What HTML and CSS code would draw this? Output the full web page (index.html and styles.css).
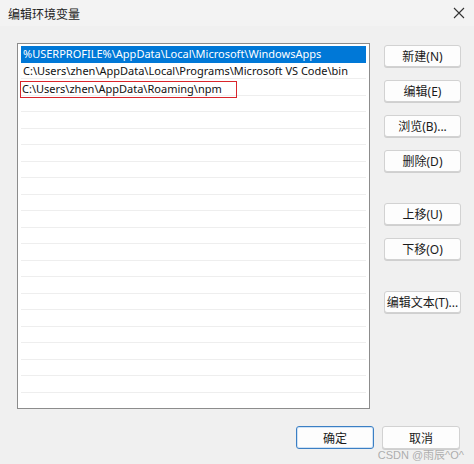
FILE: index.html
```html
<!DOCTYPE html>
<html lang="zh">
<head>
<meta charset="utf-8">
<link rel="stylesheet" href="styles.css">
</head>
<body>
<div class="window">
  <div class="titlebar">
    <span class="title">编辑环境变量</span>
    <svg class="close" width="12" height="12" viewBox="0 0 12 12"><path d="M1 1L11 11M11 1L1 11" stroke="#333" stroke-width="1.1" fill="none"/></svg>
  </div>
  <div class="content">
    <div class="list">
      <div class="row selected">%USERPROFILE%\AppData\Local\Microsoft\WindowsApps</div>
      <div class="row">C:\Users\zhen\AppData\Local\Programs\Microsoft VS Code\bin</div>
      <div class="row"><span class="marked">C:\Users\zhen\AppData\Roaming\npm</span></div>
      <div class="row"></div><div class="row"></div><div class="row"></div><div class="row"></div>
      <div class="row"></div><div class="row"></div><div class="row"></div><div class="row"></div>
      <div class="row"></div><div class="row"></div><div class="row"></div><div class="row"></div>
      <div class="row"></div><div class="row"></div><div class="row"></div><div class="row"></div>
      <div class="row"></div><div class="row"></div>
    </div>
    <div class="side">
      <button class="btn">新建(N)</button>
      <button class="btn">编辑(E)</button>
      <button class="btn">浏览(B)...</button>
      <button class="btn">删除(D)</button>
      <button class="btn group">上移(U)</button>
      <button class="btn">下移(O)</button>
      <button class="btn group">编辑文本(T)...</button>
    </div>
  </div>
  <div class="footer">
    <button class="btn primary">确定</button>
    <button class="btn">取消</button>
  </div>
  <div class="watermark">CSDN @雨辰^O^</div>
</div>
</body>
</html>
```
FILE: styles.css
```css
html, body {
  margin: 0;
  padding: 0;
  background: #f0f0f0;
}
.window {
  position: relative;
  width: 474px;
  height: 464px;
  background: #f0f0f0;
  font-family: "Noto Sans", "Noto Sans CJK SC", sans-serif;
  font-size: 12px;
  color: #1a1a1a;
  overflow: hidden;
}
.titlebar {
  height: 26px;
  display: flex;
  align-items: center;
  justify-content: space-between;
  padding: 0 8px 0 8px;
  background: #f3f3f3;
}
.title {
  font-family: "Noto Sans CJK SC", sans-serif;
  font-size: 12px;
  color: #222;
}
.close {
  margin-right: 1px;
}
.content {
  display: flex;
  align-items: flex-start;
  padding: 17px 0 0 17px;
}
.list {
  width: 345px;
  height: 362px;
  border: 1px solid #8c8c8c;
  background: #fff;
  padding: 2px 3px 0 3px;
  box-sizing: content-box;
  overflow: hidden;
}
.row {
  height: 16.5px;
  line-height: 16.5px;
  font-size: 11px;
  background-image: linear-gradient(#eeeeee, #eeeeee);
  background-size: 100% 1px;
  background-position: bottom;
  background-repeat: no-repeat;
  padding-left: 2px;
  white-space: nowrap;
  color: #111;
}
.row.selected {
  background: #0078d7;
  color: #fff;
}
.marked {
  display: inline-block;
  box-sizing: border-box;
  width: 217px;
  height: 17px;
  border: 1.5px solid #d9252c;
  padding-left: 1px;
  margin-left: -3px;
  margin-top: 2px;
  line-height: 14px;
  vertical-align: top;
}
.side {
  display: flex;
  flex-direction: column;
  margin-left: 14px;
  padding-top: 2px;
}
.btn {
  width: 77px;
  height: 22px;
  margin: 0 0 13px 0;
  padding: 0;
  border: 1px solid #d2d2d2;
  border-radius: 3px;
  background: #fdfdfd;
  font-family: "Noto Sans", "Noto Sans CJK SC", sans-serif;
  font-size: 12px;
  color: #1a1a1a;
  box-shadow: 0 1px 0 #cfcfcf;
}
.btn.group {
  margin-top: 18px;
}
.footer {
  display: flex;
  justify-content: flex-end;
  gap: 8px;
  padding: 17px 14px 0 0;
}
.footer .btn {
  width: 78px;
  height: 23px;
  margin: 0;
}
.btn.primary {
  border: 1px solid #3b7fc4;
  box-shadow: inset 0 0 0 1px #cfe2f5;
}
.watermark {
  position: absolute;
  right: 10px;
  bottom: 2px;
  font-family: "Liberation Sans", "Noto Sans CJK SC", sans-serif;
  font-size: 11px;
  color: rgba(160, 160, 160, 0.85);
}
```
